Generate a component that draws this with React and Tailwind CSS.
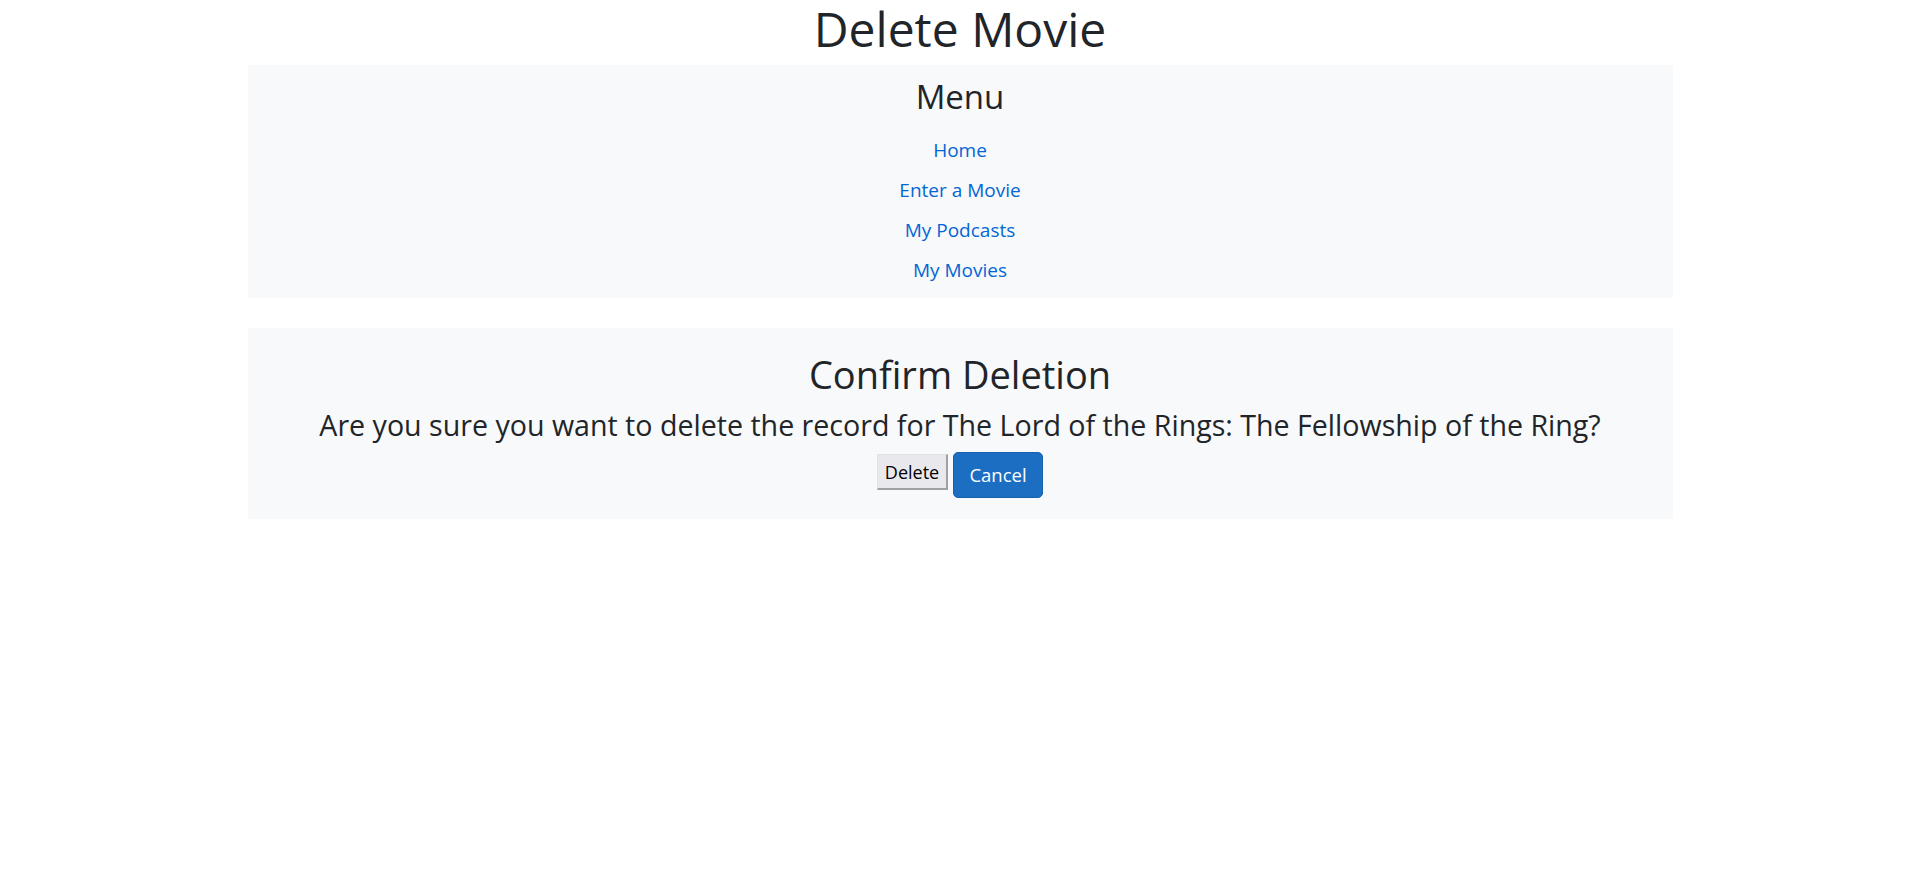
import React from 'react';

const links = ['Home', 'Enter a Movie', 'My Podcasts', 'My Movies'];

export default function App() {
  return (
    <div className="min-h-screen bg-white text-[#212529] font-['Open_Sans',sans-serif]">
      <h1 className="pt-[1px] text-center text-[48px] leading-[56px] font-normal">Delete Movie</h1>

      {/* Menu */}
      <div className="mx-auto mt-[8px] w-[1425px] bg-[#f8f9fa] pt-[10px] pb-[13px] text-center">
        <h3 className="text-[33px] leading-[44px] font-normal">Menu</h3>
        <ul className="mt-[16px] flex flex-col gap-[10px]">
          {links.map((l) => (
            <li key={l} className="text-[19px] leading-[30px]">
              <a href="#" className="text-[#0366d6]">{l}</a>
            </li>
          ))}
        </ul>
      </div>

      {/* Confirm */}
      <div className="mx-auto mt-[30px] w-[1425px] bg-[#f8f9fa] pt-[22px] pb-[21px] text-center">
        <h2 className="text-[38px] leading-[48px] font-normal">Confirm Deletion</h2>
        <p className="mt-[7px] text-[28.6px] leading-[40px]">
          Are you sure you want to delete the record for The Lord of the Rings: The Fellowship of the Ring?
        </p>
        <div className="mt-[7px] flex justify-center items-start gap-[5px]">
          <button className="mt-[2px] h-[36px] w-[71px] bg-[#e9e9ed] border border-[#e3e3e3] border-r-2 border-b-2 border-r-[#a0a0a0] border-b-[#a0a0a0] text-[18px] leading-none text-black">
            Delete
          </button>
          <a href="#" className="h-[46px] w-[90px] flex items-center justify-center rounded-[5px] bg-[#1b6ec2] border border-[#1861ac] text-white text-[18.5px]">
            Cancel
          </a>
        </div>
      </div>
    </div>
  );
}
